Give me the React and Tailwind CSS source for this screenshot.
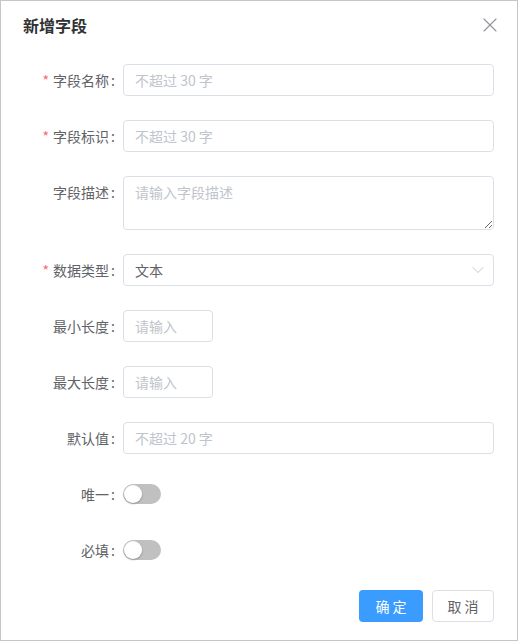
import { X, ChevronDown } from 'lucide-react'

const font = { fontFamily: '"Microsoft YaHei", "Noto Sans CJK SC", "Noto Sans", sans-serif' }

function Label({ text, required }) {
  return (
    <div className="w-[122px] shrink-0 pr-2 text-right text-sm leading-8 text-[#606266]">
      {required && <span className="mr-1 text-[#f56c6c]">*</span>}
      {text}
      <span className="ml-[2px]">:</span>
    </div>
  )
}

function TextInput({ placeholder, narrow }) {
  return (
    <input
      placeholder={placeholder}
      className={`${narrow ? 'w-[90px]' : 'w-full'} h-8 rounded border border-[#dcdfe6] bg-white px-[11px] text-sm text-[#606266] outline-none placeholder:text-[#c0c4cc]`}
      style={font}
    />
  )
}

function Switch() {
  return (
    <div className="relative h-5 w-[38px] rounded-full bg-[#c0c0c0]">
      <div className="absolute left-[1px] top-[1px] h-[18px] w-[18px] rounded-full bg-white shadow-[0_1px_2px_rgba(0,0,0,0.25)]" />
    </div>
  )
}

export default function App() {
  return (
    <div className="box-border h-[641px] w-[518px] border border-[#c6c6c6] bg-white" style={font}>
      {/* header */}
      <div className="flex h-12 items-center justify-between pl-[22px] pr-[15px]">
        <h3 className="text-base font-bold leading-6 text-[#303133]">新增字段</h3>
        <X size={24} strokeWidth={1.1} className="text-[#909399]" />
      </div>

      <div className="pt-[15px] pr-[23px]">
        <div className="mb-6 flex">
          <Label text="字段名称" required />
          <TextInput placeholder="不超过 30 字" />
        </div>
        <div className="mb-6 flex">
          <Label text="字段标识" required />
          <TextInput placeholder="不超过 30 字" />
        </div>
        <div className="mb-6 flex">
          <Label text="字段描述" />
          <textarea
            placeholder="请输入字段描述"
            className="block h-[54px] w-full rounded border border-[#dcdfe6] px-[11px] py-[5px] text-sm leading-5 text-[#606266] outline-none placeholder:text-[#c0c4cc]"
            style={font}
          />
        </div>
        <div className="mb-6 flex">
          <Label text="数据类型" required />
          <div className="flex h-8 w-full items-center justify-between rounded border border-[#dcdfe6] pl-[11px] pr-[5px] text-sm text-[#606266]">
            <span>文本</span>
            <ChevronDown size={20} strokeWidth={1.1} className="text-[#c0c4cc]" />
          </div>
        </div>
        <div className="mb-6 flex">
          <Label text="最小长度" />
          <TextInput placeholder="请输入" narrow />
        </div>
        <div className="mb-6 flex">
          <Label text="最大长度" />
          <TextInput placeholder="请输入" narrow />
        </div>
        <div className="mb-6 flex">
          <Label text="默认值" />
          <TextInput placeholder="不超过 20 字" />
        </div>
        <div className="mb-6 flex items-center">
          <Label text="唯一" />
          <Switch />
        </div>
        <div className="mb-6 flex items-center">
          <Label text="必填" />
          <Switch />
        </div>

        <div className="flex justify-end gap-[9px]">
          <button className="h-8 w-16 rounded bg-[#3a9cff] text-sm text-white">确 定</button>
          <button className="h-8 w-[62px] rounded border border-[#dcdfe6] bg-white text-sm text-[#606266]">取 消</button>
        </div>
      </div>
    </div>
  )
}
